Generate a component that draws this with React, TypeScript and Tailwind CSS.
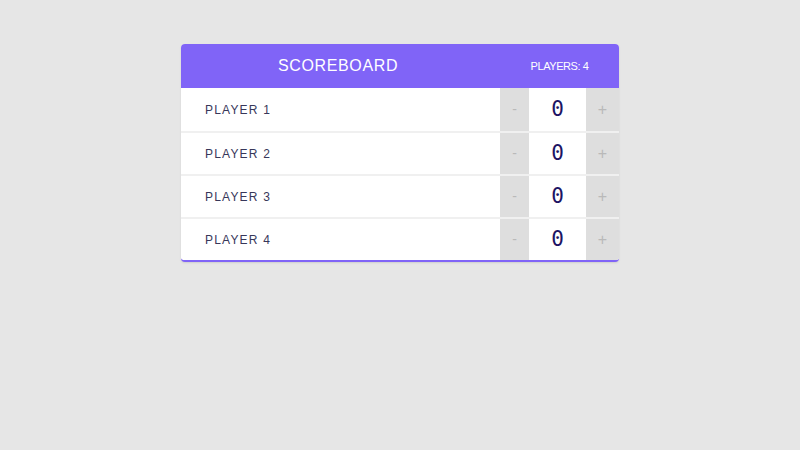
import React from "react";

const players = ["PLAYER 1", "PLAYER 2", "PLAYER 3", "PLAYER 4"];

export default function App() {
  return (
    <div className="min-h-[450px] w-full bg-[#e6e6e6] pt-[44px]" style={{ fontFamily: '"Liberation Sans", Arial, sans-serif' }}>
      <div className="mx-auto w-[438px] overflow-hidden rounded-[4px] border-b-2 border-[#8064f7] bg-white shadow-[0_1px_2px_rgba(0,0,0,0.1)]">
        <div className="flex h-[44px] items-center bg-[#8064f7] text-white">
          <h1 className="flex-1 pr-[5px] text-center text-[16px] tracking-[0.04em]">SCOREBOARD</h1>
          <div className="w-[119px] text-center text-[11px] tracking-[-0.04em]">PLAYERS: 4</div>
        </div>
        {players.map((p, i) => (
          <div key={p} className={`flex h-[43px] items-stretch ${i > 0 ? "border-t-2 border-[#f0f0f0]" : ""}`}>
            <div className="flex flex-1 items-center pl-[24px] text-[12px] tracking-[0.1em] text-[#37375a]">{p}</div>
            <div className="flex w-[29px] items-center justify-center bg-[#dedede] text-[14px] text-[#b9b9b9]">-</div>
            <div className="flex w-[57px] items-center justify-center text-[21px] text-[#1c1464]" style={{ fontFamily: '"DejaVu Sans Mono", monospace' }}>0</div>
            <div className="flex w-[33px] items-center justify-center bg-[#dedede] text-[16px] text-[#b9b9b9]">+</div>
          </div>
        ))}
      </div>
    </div>
  );
}
